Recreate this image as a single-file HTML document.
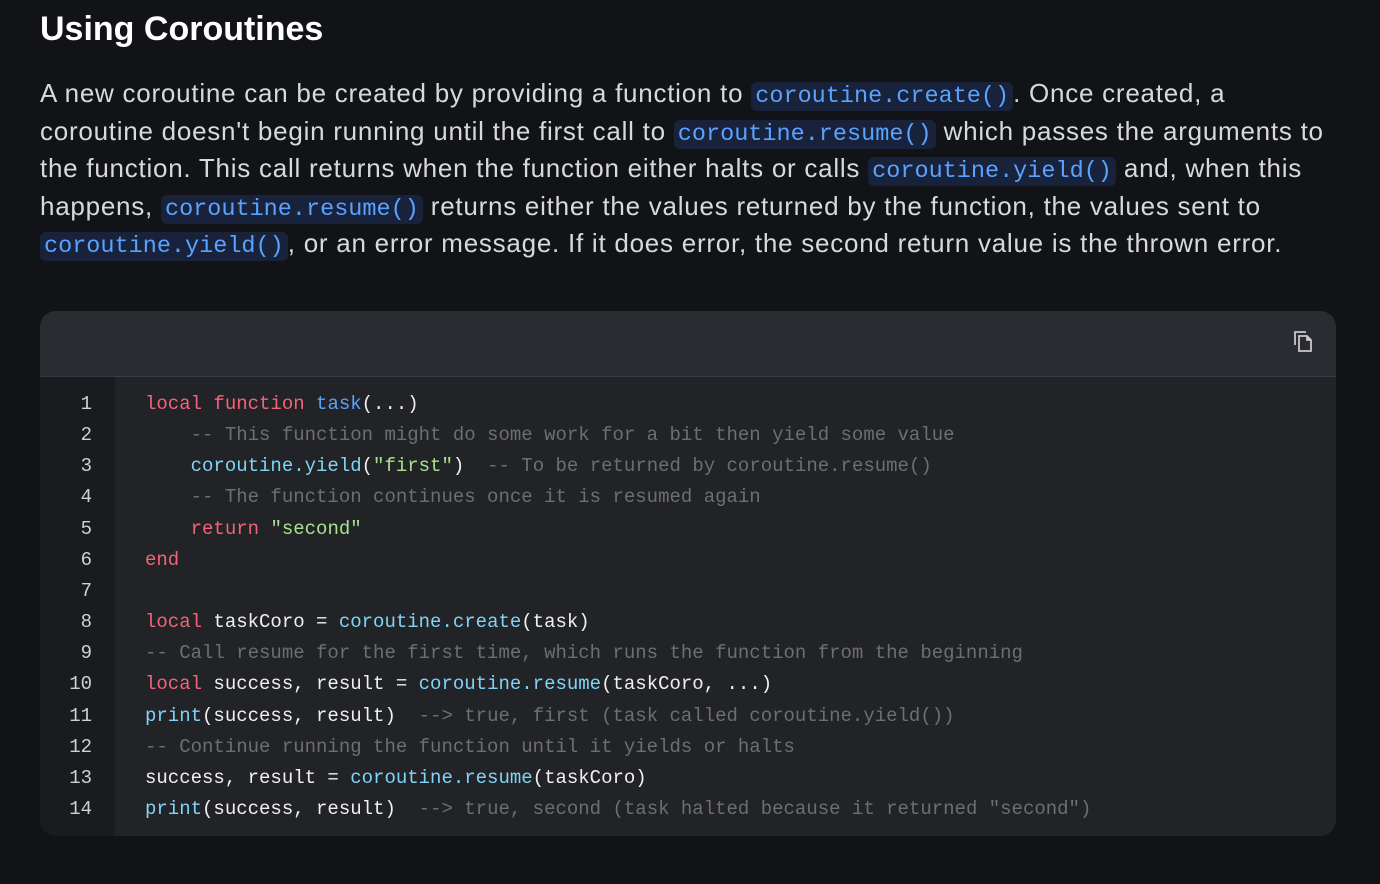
<!DOCTYPE html>
<html><head><meta charset="utf-8"><style>
body{margin:0;background:#121317;width:1380px;height:884px;overflow:hidden;font-family:"Liberation Sans",sans-serif;color:#e2e3e6}
h1{position:absolute;left:40px;top:10px;margin:0;font-size:34px;font-weight:bold;color:#fff;letter-spacing:0}
p{position:absolute;left:40px;top:75px;width:1340px;margin:0;font-size:26px;line-height:37.6px;color:#d8d9dc;letter-spacing:0.75px;white-space:nowrap}
code{font-family:"Liberation Mono",monospace;font-size:23.5px;line-height:1;letter-spacing:0;color:#5aa2ff;background:#18223a;border-radius:6px;padding:1px 4px}
.card{position:absolute;left:40px;top:311px;width:1296px;height:525px;border-radius:16px;overflow:hidden;background:#222326}
.hd{height:65px;background:#2b2c31;border-bottom:1px solid #3a3b40;position:relative}
.gut{position:absolute;left:0;top:66px;width:75px;bottom:0;background:#1a1b1e}
pre{margin:0;font-family:"Liberation Mono",monospace;font-size:19px;line-height:31.15px;position:absolute;top:78px}
.ln{left:0;width:52px;text-align:right;color:#cfd0d3}
.cd{left:105px;color:#f0f0f2}
.k{color:#f2637a}.f{color:#5aa2ff}.c{color:#7fd4f7}.s{color:#a8e28e}.m{color:#6d6e72}
</style></head><body>
<h1>Using Coroutines</h1>
<p>A new coroutine can be created by providing a function to <code>coroutine.create()</code>. Once created, a<br>coroutine doesn't begin running until the first call to <code>coroutine.resume()</code> which passes the arguments to<br>the function. This call returns when the function either halts or calls <code>coroutine.yield()</code> and, when this<br>happens, <code>coroutine.resume()</code> returns either the values returned by the function, the values sent to<br><code>coroutine.yield()</code>, or an error message. If it does error, the second return value is the thrown error.</p>
<div class="card"><div class="hd">
<svg style="position:absolute;left:1252px;top:18px" width="24" height="24" viewBox="0 0 24 24" fill="none" stroke="#c8c9cc" stroke-width="1.8"><path d="M3 16V3h11"/><path d="M7 7h8l4 4v11H7z"/><path d="M15 7v4h4" fill="#c8c9cc"/></svg>
</div><div class="gut"></div>
<pre class="ln">1
2
3
4
5
6
7
8
9
10
11
12
13
14</pre>
<pre class="cd"><span class="k">local</span> <span class="k">function</span> <span class="f">task</span>(...)
    <span class="m">-- This function might do some work for a bit then yield some value</span>
    <span class="c">coroutine.yield</span>(<span class="s">"first"</span>)  <span class="m">-- To be returned by coroutine.resume()</span>
    <span class="m">-- The function continues once it is resumed again</span>
    <span class="k">return</span> <span class="s">"second"</span>
<span class="k">end</span>

<span class="k">local</span> taskCoro = <span class="c">coroutine.create</span>(task)
<span class="m">-- Call resume for the first time, which runs the function from the beginning</span>
<span class="k">local</span> success, result = <span class="c">coroutine.resume</span>(taskCoro, ...)
<span class="c">print</span>(success, result)  <span class="m">--&gt; true, first (task called coroutine.yield())</span>
<span class="m">-- Continue running the function until it yields or halts</span>
success, result = <span class="c">coroutine.resume</span>(taskCoro)
<span class="c">print</span>(success, result)  <span class="m">--&gt; true, second (task halted because it returned "second")</span></pre>
</div>
</body></html>
